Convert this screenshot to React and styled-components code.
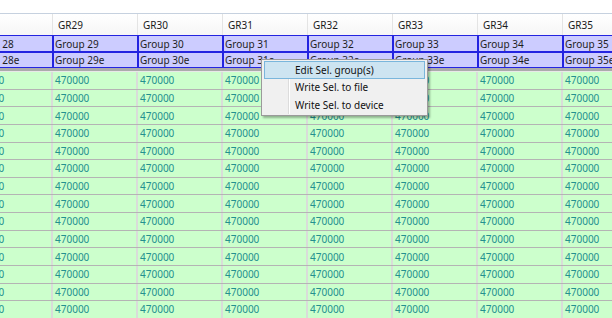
import React from 'react';
import styled, { createGlobalStyle } from 'styled-components';

const Global = createGlobalStyle`
    html, body {
        margin: 0;
        padding: 0;
        background: #fff;
        overflow: hidden;
    }
`;

const Screen = styled.div`
    position: relative;
    width: 612px;
    height: 318px;
    overflow: hidden;
    background: #fff;
    font-family: "Noto Sans", "Liberation Sans", sans-serif;
    font-size: 10px;
    padding-top: 13px;
    box-sizing: border-box;
`;

const Grid = styled.div`
    margin-left: -32px;
    width: 680px;
`;

const Row = styled.div`
    display: flex;
    height: ${p => p.h}px;
`;

const HeadRow = styled(Row)`
    border-top: 1px solid #c6d1df;
    background: linear-gradient(#ffffff, #f6f6f6);
`;

const HeadCell = styled.div`
    width: 85px;
    flex: none;
    box-sizing: border-box;
    border-right: 1px solid #e4e4e4;
    padding-left: 5px;
    display: flex;
    align-items: center;
    color: #1a1a1a;
`;

const GroupCell = styled.div`
    width: 85px;
    flex: none;
    box-sizing: border-box;
    border: 1px solid #2424e0;
    background: #ccccff;
    padding-left: 1px;
    display: flex;
    align-items: center;
    color: #1e1e1e;
    white-space: nowrap;
    overflow: hidden;
`;

const Divider = styled.div`
    height: 3px;
    background: #ababab;
    border-bottom: 1px solid #e8e8e8;
`;

const DataRow = styled.div`
    display: flex;
    height: 17.64px;
    box-sizing: border-box;
    border-bottom: 1px solid #b4b4b4;
`;

const DataCell = styled.div`
    width: 85px;
    flex: none;
    box-sizing: border-box;
    background: #ccffcc;
    border-right: 2px solid #d9dcd9;
    padding-left: 2px;
    display: flex;
    align-items: center;
    color: #23908f;
`;

const Menu = styled.div`
    position: absolute;
    left: 261px;
    top: 59px;
    width: 167px;
    height: 57px;
    box-sizing: border-box;
    background: #f0f0f0;
    border: 1px solid #9a9a9a;
    box-shadow: 2px 2px 2px rgba(0, 0, 0, 0.3);
    padding: 1px 2px;
    font-size: 10px;
    color: #111;
`;

const Gutter = styled.div`
    position: absolute;
    left: 26px;
    top: 1px;
    bottom: 1px;
    width: 1px;
    background: #dcdcdc;
    border-right: 1px solid #fff;
`;

const Item = styled.div`
    position: relative;
    height: 17.5px;
    box-sizing: border-box;
    display: flex;
    align-items: center;
    padding-left: 30px;
    border: 1px solid ${p => (p.active ? '#7ab6dc' : 'transparent')};
    background: ${p => (p.active ? '#cde4f1' : 'transparent')};
`;

const cols = [28, 29, 30, 31, 32, 33, 34, 35];
const dataRows = Array.from({ length: 15 }, (_, i) => i);

export default function App() {
    return (
        <Screen>
            <Global />
            <Grid>
                <HeadRow h={21}>
                    {cols.map(c => <HeadCell key={c}>GR{c}</HeadCell>)}
                </HeadRow>
                <Row h={17}>
                    {cols.map(c => <GroupCell key={c}>Group {c}</GroupCell>)}
                </Row>
                <Row h={16}>
                    {cols.map(c => <GroupCell key={c}>Group {c}e</GroupCell>)}
                </Row>
                <Divider />
                {dataRows.map(r => (
                    <DataRow key={r}>
                        {cols.map(c => <DataCell key={c}>470000</DataCell>)}
                    </DataRow>
                ))}
            </Grid>
            <Menu>
                <Gutter />
                <Item active>Edit Sel. group(s)</Item>
                <Item>Write Sel. to file</Item>
                <Item>Write Sel. to device</Item>
            </Menu>
        </Screen>
    );
}
